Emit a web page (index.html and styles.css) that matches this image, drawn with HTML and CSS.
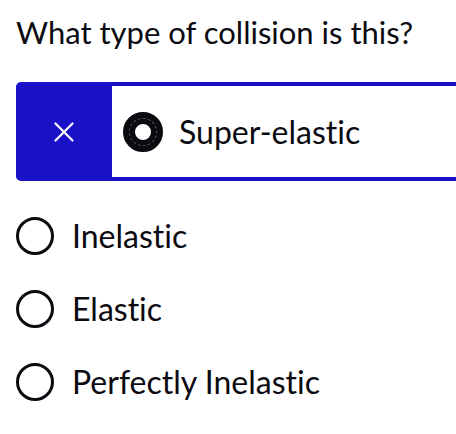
FILE: index.html
```html
<!DOCTYPE html>
<html lang="en">
<head>
<meta charset="utf-8">
<title>Quiz</title>
<link rel="stylesheet" href="styles.css">
</head>
<body>
<main class="quiz">
  <h1 class="question">What type of collision is this?</h1>
  <div class="selected-wrap">
    <div class="option-selected">
      <div class="mark">
        <svg class="mark-icon" viewBox="0 0 20 20" width="20" height="20" aria-hidden="true">
          <path d="M1.5 1.5 L18.5 18.5 M18.5 1.5 L1.5 18.5" stroke="#ffffff" stroke-width="2.2" stroke-linecap="round" fill="none"/>
        </svg>
      </div>
      <div class="choice">
        <span class="radio radio-on"><span class="focus-ring"></span></span>
        <span class="label">Super-elastic</span>
      </div>
    </div>
  </div>
  <div class="options">
    <div class="option">
      <span class="radio"></span>
      <span class="label">Inelastic</span>
    </div>
    <div class="option">
      <span class="radio"></span>
      <span class="label">Elastic</span>
    </div>
    <div class="option">
      <span class="radio"></span>
      <span class="label">Perfectly Inelastic</span>
    </div>
  </div>
</main>
</body>
</html>
```
FILE: styles.css
```css
html, body {
  margin: 0;
  padding: 0;
  background: #ffffff;
  overflow: hidden;
}

body {
  font-family: Lato, "Liberation Sans", sans-serif;
  color: #0b0a10;
  font-variant-ligatures: none;
  font-feature-settings: "liga" 0, "clig" 0;
}

.quiz {
  padding: 14px 0 0 16px;
}

.question {
  margin: 0;
  font-size: 31px;
  font-weight: 400;
  line-height: 37px;
}

.selected-wrap {
  margin-top: 31px;
}

.option-selected {
  display: flex;
  height: 99px;
  width: 500px;
  box-sizing: border-box;
  border-top: 4px solid #1a12c8;
  border-bottom: 4px solid #1a12c8;
  border-radius: 5px 0 0 5px;
  background: #1a12c8;
  overflow: hidden;
}

.mark {
  width: 96px;
  flex: none;
  display: flex;
  align-items: center;
  justify-content: center;
  background: #1a12c8;
}

.mark-icon {
  display: block;
}

.choice {
  flex: 1;
  display: flex;
  align-items: center;
  gap: 16px;
  padding-left: 11px;
  background: #ffffff;
}

.options {
  margin-top: 36px;
  display: flex;
  flex-direction: column;
  gap: 35px;
}

.option {
  display: flex;
  align-items: center;
  gap: 18px;
  height: 38px;
}

.radio {
  position: relative;
  flex: none;
  width: 38px;
  height: 38px;
  box-sizing: border-box;
  border: 3.5px solid #0b0a10;
  border-radius: 50%;
  background: #ffffff;
}

.radio-on {
  width: 40px;
  height: 40px;
  border-width: 12px;
}

.focus-ring {
  position: absolute;
  inset: -6px;
  border: 1px dashed rgba(190, 170, 150, 0.45);
  border-radius: 50%;
}

.label {
  font-size: 32px;
  line-height: 38px;
  white-space: nowrap;
}
```
